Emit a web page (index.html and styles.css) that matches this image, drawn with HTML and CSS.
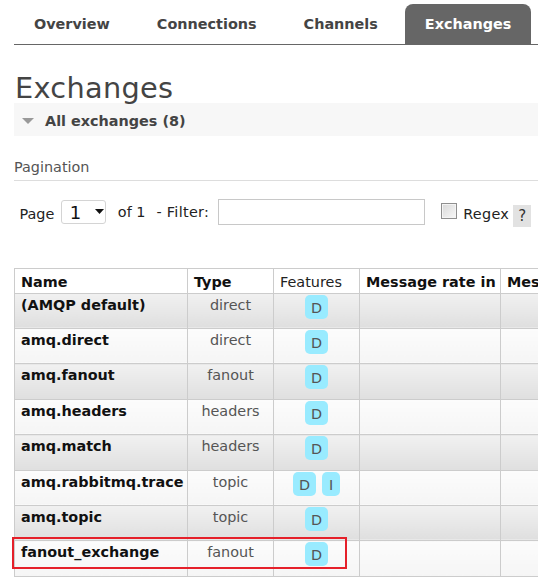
FILE: index.html
```html
<!DOCTYPE html>
<html>
<head>
<meta charset="utf-8">
<title>Exchanges</title>
<link rel="stylesheet" href="styles.css">
</head>
<body>
<div class="page">
  <ul class="tabs">
    <li class="tab">Overview</li>
    <li class="tab">Connections</li>
    <li class="tab">Channels</li>
    <li class="tab active">Exchanges</li>
  </ul>

  <h1 class="title">Exchanges</h1>

  <div class="section-head"><span class="caret"></span>All exchanges (8)</div>

  <div class="pagination-label">Pagination</div>

  <div class="controls">
    <span class="lbl page-lbl">Page</span>
    <div class="select">
      <span class="select-val">1</span>
      <svg class="select-arrow" width="9" height="5" viewBox="0 0 9 5"><path d="M0 0 H9 L4.5 5 Z" fill="#111"/></svg>
    </div>
    <span class="lbl of-lbl">of 1</span>
    <span class="lbl filter-lbl">- Filter:</span>
    <input class="filter-input" type="text">
    <span class="checkbox"></span>
    <span class="lbl regex-lbl">Regex</span>
    <span class="help">?</span>
  </div>

  <div class="table-wrap">
    <table class="list">
      <colgroup>
        <col class="c-name"><col class="c-type"><col class="c-feat"><col class="c-rate"><col class="c-rate2">
      </colgroup>
      <thead>
        <tr>
          <th>Name</th>
          <th>Type</th>
          <th class="plain">Features</th>
          <th>Message rate in</th>
          <th>Message rate out</th>
        </tr>
      </thead>
      <tbody>
        <tr class="alt1"><td class="name">(AMQP default)</td><td class="type">direct</td><td class="feat"><abbr class="badge">D</abbr></td><td></td><td></td></tr>
        <tr class="alt2"><td class="name">amq.direct</td><td class="type">direct</td><td class="feat"><abbr class="badge">D</abbr></td><td></td><td></td></tr>
        <tr class="alt1"><td class="name">amq.fanout</td><td class="type">fanout</td><td class="feat"><abbr class="badge">D</abbr></td><td></td><td></td></tr>
        <tr class="alt2"><td class="name">amq.headers</td><td class="type">headers</td><td class="feat"><abbr class="badge">D</abbr></td><td></td><td></td></tr>
        <tr class="alt1"><td class="name">amq.match</td><td class="type">headers</td><td class="feat"><abbr class="badge">D</abbr></td><td></td><td></td></tr>
        <tr class="alt2"><td class="name">amq.rabbitmq.trace</td><td class="type">topic</td><td class="feat"><abbr class="badge">D</abbr><abbr class="badge">I</abbr></td><td></td><td></td></tr>
        <tr class="alt1"><td class="name">amq.topic</td><td class="type">topic</td><td class="feat"><abbr class="badge">D</abbr></td><td></td><td></td></tr>
        <tr class="alt2"><td class="name">fanout_exchange</td><td class="type">fanout</td><td class="feat"><abbr class="badge">D</abbr></td><td></td><td></td></tr>
      </tbody>
    </table>
    <div class="highlight"></div>
  </div>
</div>
</body>
</html>
```

FILE: styles.css
```css
html, body {
  margin: 0;
  padding: 0;
  background: #fff;
}

body {
  font-family: "DejaVu Sans", Verdana, sans-serif;
  font-size: 14.4px;
  color: #484848;
}

.page {
  width: 538px;
  height: 581px;
  overflow: hidden;
  padding-left: 14px;
  box-sizing: border-box;
}

/* Tabs */
.tabs {
  list-style: none;
  margin: 4px 0 0 0;
  padding: 0;
  display: flex;
  gap: 7px;
  border-bottom: 1px solid #666;
}

.tab {
  height: 40px;
  line-height: 40px;
  padding: 0 20px;
  font-weight: bold;
  color: #444;
  white-space: nowrap;
}

.tab.active {
  background: #666;
  color: #fff;
  border-radius: 8px 8px 0 0;
}

/* Title */
.title {
  margin: 28.3px 0 0 0;
  font-size: 28.8px;
  line-height: 30px;
  font-weight: normal;
  color: #444;
  letter-spacing: 0.3px;
  padding-left: 1px;
}

.section-head {
  height: 33px;
  box-sizing: border-box;
  padding-top: 3px;
  line-height: 30px;
  background: #f7f7f7;
  font-weight: bold;
  color: #444;
}

.caret {
  display: inline-block;
  width: 0;
  height: 0;
  border-left: 6.5px solid transparent;
  border-right: 6.5px solid transparent;
  border-top: 6px solid #999;
  margin: 0 11px 0 8px;
  vertical-align: 2px;
}

.pagination-label {
  margin-top: 20.3px;
  line-height: 20px;
  padding-bottom: 3.5px;
  border-bottom: 1px solid #ddd;
  color: #555;
}

/* Controls row */
.controls {
  margin-top: 18px;
  height: 26px;
  display: flex;
  align-items: center;
  color: #222;
}

.lbl {
  white-space: nowrap;
  line-height: 20px;
}

.page-lbl {
  margin-left: 5.5px;
  margin-top: 3px;
}

.select {
  margin-left: 6.5px;
  width: 45px;
  height: 24px;
  box-sizing: border-box;
  border: 1px solid #d4d4d4;
  border-radius: 3px;
  background: #fff;
  display: flex;
  align-items: center;
  padding-left: 8px;
  color: #111;
}

.select-val {
  font-size: 18px;
  line-height: 20px;
  margin-top: 1px;
}

.select-arrow {
  margin-left: 14px;
  margin-top: -1px;
}

.of-lbl {
  margin-left: 12px;
}

.filter-lbl {
  margin-left: 11px;
  margin-top: -1px;
  letter-spacing: 0.3px;
}

.filter-input {
  margin: 0 0 0 9px;
  width: 207px;
  height: 25.5px;
  box-sizing: border-box;
  border: 1px solid #c8c8c8;
  padding: 0 4px;
  font-family: inherit;
  font-size: 14.4px;
  background: #fff;
}

.checkbox {
  margin-left: 16px;
  width: 16px;
  height: 16px;
  box-sizing: border-box;
  border: 1px solid #8f8f8f;
  background: linear-gradient(135deg, #d8d8d8, #f8f8f8);
  box-shadow: inset 0 0 0 1px #f4f4f4;
  margin-top: -2px;
}

.regex-lbl {
  margin-left: 6px;
  margin-top: 3px;
  letter-spacing: 0.3px;
}

.help {
  margin-left: 4px;
  width: 18px;
  height: 22px;
  line-height: 22px;
  text-align: center;
  background: #e2e2e2;
  color: #333;
  font-size: 15px;
  margin-top: 7px;
}

/* Table */
.table-wrap {
  position: relative;
  margin-top: 42.5px;
}

table.list {
  border-collapse: collapse;
  table-layout: fixed;
  width: 700px;
}

.c-name { width: 173px; }
.c-type { width: 86px; }
.c-feat { width: 86px; }
.c-rate { width: 141px; }
.c-rate2 { width: 214px; }

table.list th,
table.list td {
  border: 1px solid #ccc;
  padding: 0 6px;
  line-height: 20px;
  white-space: nowrap;
  overflow: hidden;
}

table.list th {
  height: 25px;
  box-sizing: border-box;
  vertical-align: bottom;
  padding-bottom: 1px;
  text-align: left;
  font-weight: bold;
  color: #111;
  background: #fff;
}

table.list th.plain {
  font-weight: normal;
  color: #222;
}

table.list tbody tr {
  height: 35.4px;
}

table.list td {
  vertical-align: top;
  padding-top: 1px;
}

tr.alt1 td {
  background: linear-gradient(#f1f1f1, #dfdfdf);
}

tr.alt2 td {
  background: linear-gradient(#fcfcfc, #f5f5f5);
}

td.name {
  font-weight: bold;
  color: #111;
}

td.type {
  text-align: center;
  color: #555;
}

td.feat {
  text-align: center;
  padding-top: 1px;
}

.badge {
  display: inline-block;
  vertical-align: top;
  min-width: 6px;
  background: #99ebff;
  border-radius: 5px;
  padding: 3px 6px 1px;
  line-height: 20px;
  color: #555;
  text-decoration: none;
  margin: 0 3px;
}

.highlight {
  position: absolute;
  left: -1.7px;
  top: 269.8px;
  width: 334.4px;
  height: 32px;
  box-sizing: border-box;
  border: 2px solid #e5202a;
  pointer-events: none;
}
```
